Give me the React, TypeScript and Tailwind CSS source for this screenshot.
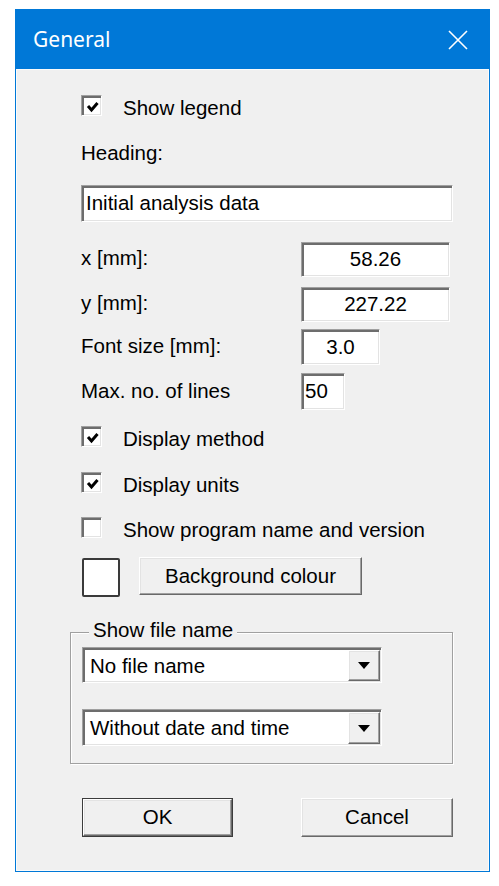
import React from "react";

const sunken =
  "bg-white border border-t-[#a0a0a0] border-l-[#a0a0a0] border-b-white border-r-white shadow-[inset_2px_2px_0_#6d6d6d,inset_-1px_-1px_0_#e3e3e3]";
const raised =
  "bg-[#f0f0f0] border border-t-white border-l-white border-b-[#696969] border-r-[#696969] shadow-[inset_-1px_-1px_0_#a0a0a0,inset_1px_1px_0_#e3e3e3]";

function Check({ checked }: { checked: boolean }) {
  return (
    <div className={`relative w-[21px] h-[21px] shrink-0 ${sunken}`}>
      {checked && (
        <svg className="absolute left-[3px] top-[3px]" width="15" height="15" viewBox="0 0 15 15">
          <polyline points="3,7 6.5,11 12.5,4" fill="none" stroke="#000" strokeWidth="3" />
        </svg>
      )}
    </div>
  );
}

function CheckRow({ checked, label, mt }: { checked: boolean; label: string; mt: string }) {
  return (
    <div className={`flex items-start h-[25px] ${mt}`}>
      <Check checked={checked} />
      <span className="ml-[21px] mt-[1px] leading-[24px] whitespace-nowrap">{label}</span>
    </div>
  );
}

function FieldRow({
  label,
  value,
  mt,
  w,
  h,
  lmt,
  align,
}: {
  label: string;
  value: string;
  mt: string;
  w: string;
  h: string;
  lmt: string;
  align: string;
}) {
  return (
    <div className={`flex items-start ${mt}`}>
      <span className={`w-[220px] leading-[24px] ${lmt}`}>{label}</span>
      <div className={`${w} ${h} flex items-center ${align} ${sunken}`}>{value}</div>
    </div>
  );
}

function Combo({ text, mt, h }: { text: string; mt: string; h: string }) {
  return (
    <div className={`ml-[11px] w-[300px] ${h} ${mt} flex items-stretch pl-[2px] pt-[2px] pr-[1px] pb-[1px] ${sunken}`}>
      <div className="flex-1 flex items-center pl-[5px] leading-[24px] whitespace-nowrap">{text}</div>
      <div className={`w-[32px] flex items-center justify-center ${raised}`}>
        <svg width="12" height="7" viewBox="0 0 12 7">
          <polygon points="0,0 12,0 6,7" fill="#000" />
        </svg>
      </div>
    </div>
  );
}

export default function App() {
  return (
    <div className="min-h-screen bg-white pt-[9px] pl-[15px]">
      <div className="w-[475px] h-[863px] border border-[#0078d7] bg-[#f0f0f0] flex flex-col font-['Liberation_Sans',Arial,sans-serif] text-[20.5px] text-black">
        <div className="h-[59px] shrink-0 bg-[#0078d7] flex items-center justify-between pl-[17px] pr-[21px]">
          <span className="font-['Noto_Sans','Open_Sans',sans-serif] text-[21px] text-white leading-none">
            General
          </span>
          <svg width="20" height="20" viewBox="0 0 20 20">
            <path d="M1 1 L19 19 M19 1 L1 19" stroke="#fff" strokeWidth="1.6" />
          </svg>
        </div>
        <div className="flex-1 flex flex-col border border-[#fbfbfb] pl-[64px]">
          <CheckRow checked label="Show legend" mt="mt-[25px]" />
          <span className="mt-[21px] leading-[24px]">Heading:</span>
          <div className={`mt-[20px] w-[372px] h-[37px] flex items-center pl-[4px] ${sunken}`}>
            Initial analysis data
          </div>
          <FieldRow label="x [mm]:" value="58.26" mt="mt-[20px]" w="w-[149px]" h="h-[35px]" lmt="mt-[4px]" align="justify-center" />
          <FieldRow label="y [mm]:" value="227.22" mt="mt-[10px]" w="w-[149px]" h="h-[35px]" lmt="mt-[4px]" align="justify-center" />
          <FieldRow label="Font size [mm]:" value="3.0" mt="mt-[7px]" w="w-[79px]" h="h-[36px]" lmt="mt-[5px]" align="justify-center" />
          <FieldRow label="Max. no. of lines" value="50" mt="mt-[8px]" w="w-[44px]" h="h-[37px]" lmt="mt-[6px]" align="justify-start pl-[3px]" />
          <CheckRow checked label="Display method" mt="mt-[16px]" />
          <CheckRow checked label="Display units" mt="mt-[21px]" />
          <CheckRow checked={false} label="Show program name and version" mt="mt-[20px]" />
          <div className="mt-[15px] flex items-start">
            <div className="mt-[1px] ml-[1px] w-[38px] h-[39px] bg-white border-2 border-[#3a3a3a] rounded-[2px]" />
            <div className={`ml-[19px] w-[223px] h-[38px] flex items-center justify-center ${raised}`}>
              Background colour
            </div>
          </div>
          <div className="relative mt-[35px] -ml-[11px] w-[383px] h-[132px] border border-[#a0a0a0] shadow-[inset_1px_1px_0_#fff,1px_1px_0_#fff] flex flex-col">
            <span className="absolute left-[18px] top-[-15px] px-[4px] bg-[#f0f0f0] leading-[24px] whitespace-nowrap">
              Show file name
            </span>
            <Combo text="No file name" mt="mt-[14px]" h="h-[36px]" />
            <Combo text="Without date and time" mt="mt-[26px]" h="h-[37px]" />
          </div>
          <div className="mt-[34px] flex items-start">
            <div className="ml-[1px] w-[151px] h-[39px] border border-[#3c3c3c] flex">
              <div className={`flex-1 flex items-center justify-center ${raised}`}>OK</div>
            </div>
            <div className={`ml-[68px] w-[152px] h-[39px] flex items-center justify-center ${raised}`}>Cancel</div>
          </div>
        </div>
      </div>
    </div>
  );
}
